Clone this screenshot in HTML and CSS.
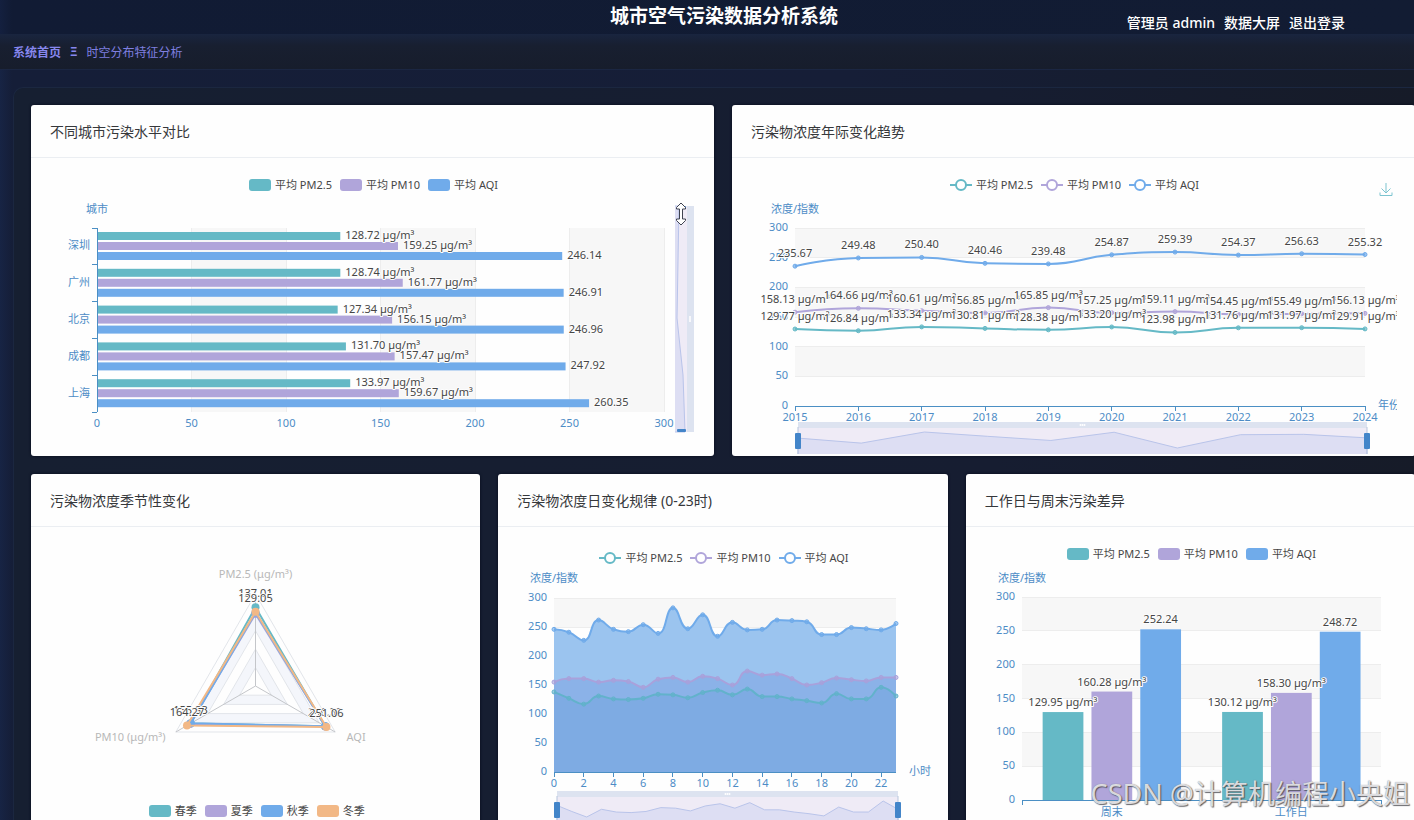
FILE: index.html
```html
<!DOCTYPE html>
<html lang="zh-CN">
<head>
<meta charset="utf-8">
<title>城市空气污染数据分析系统</title>
<link rel="stylesheet" href="styles.css">
</head>
<body>
<div class="app">
  <header class="topbar">
    <h1 class="topbar-title">城市空气污染数据分析系统</h1>
    <nav class="topbar-nav">
      <a href="#user">管理员 admin</a>
      <a href="#screen">数据大屏</a>
      <a href="#logout">退出登录</a>
    </nav>
  </header>
  <nav class="crumbs" aria-label="面包屑">
    <a class="crumb-home" href="#home">系统首页</a>
    <span class="crumb-sep">Ξ</span>
    <a href="#spacetime">时空分布特征分析</a>
  </nav>
  <main class="panel">
    <div class="row row-2">
      <section class="card">
        <h2 class="card-title">不同城市污染水平对比</h2>
        <div class="card-body">
          <ul class="legend">
            <li><i class="swatch teal"></i>平均 PM2.5</li>
            <li><i class="swatch purple"></i>平均 PM10</li>
            <li><i class="swatch blue"></i>平均 AQI</li>
          </ul>
          <svg class="chart chart-upper" id="cityChart"></svg>
        </div>
      </section>
      <section class="card">
        <h2 class="card-title">污染物浓度年际变化趋势</h2>
        <div class="card-body">
          <ul class="legend">
            <li><i class="ring teal"></i>平均 PM2.5</li>
            <li><i class="ring purple"></i>平均 PM10</li>
            <li><i class="ring blue"></i>平均 AQI</li>
          </ul>
          <button class="save" type="button" aria-label="保存为图片">
            <svg width="14" height="15" viewBox="0 0 14 15"><path d="M7 1v10M2.500 6.500 7 11l4.500-4.500M1 10.500v3h12v-3"/></svg>
          </button>
          <svg class="chart chart-upper" id="yearChart"></svg>
        </div>
      </section>
    </div>
    <div class="row row-3">
      <section class="card">
        <h2 class="card-title">污染物浓度季节性变化</h2>
        <div class="card-body">
          <svg class="chart chart-radar" id="seasonChart"></svg>
          <ul class="legend">
            <li><i class="swatch teal"></i>春季</li>
            <li><i class="swatch purple"></i>夏季</li>
            <li><i class="swatch blue"></i>秋季</li>
            <li><i class="swatch orange"></i>冬季</li>
          </ul>
        </div>
      </section>
      <section class="card">
        <h2 class="card-title">污染物浓度日变化规律 (0-23时)</h2>
        <div class="card-body">
          <ul class="legend legend-low">
            <li><i class="ring teal"></i>平均 PM2.5</li>
            <li><i class="ring purple"></i>平均 PM10</li>
            <li><i class="ring blue"></i>平均 AQI</li>
          </ul>
          <svg class="chart chart-lower" id="hourChart"></svg>
        </div>
      </section>
      <section class="card">
        <h2 class="card-title">工作日与周末污染差异</h2>
        <div class="card-body">
          <ul class="legend">
            <li><i class="swatch teal"></i>平均 PM2.5</li>
            <li><i class="swatch purple"></i>平均 PM10</li>
            <li><i class="swatch blue"></i>平均 AQI</li>
          </ul>
          <svg class="chart chart-lower" id="weekChart"></svg>
        </div>
      </section>
    </div>
  </main>
  <div class="watermark">CSDN @计算机编程小央姐</div>
</div>
<script src="charts.js"></script>
</body>
</html>
```

FILE: styles.css
```css
*,
*::before {
  box-sizing: border-box;
}

body {
  margin: 0;
  font-family: "Noto Sans", "Noto Sans CJK SC", sans-serif;
  background: #151d33;
}

a {
  color: inherit;
  text-decoration: none;
}

.app {
  position: relative;
  height: 100vh;
  overflow: hidden;
  background: linear-gradient(90deg, #172444 0, #151e38 12px, #161e37 60%, #161c2a 100%);
}

.topbar {
  display: grid;
  grid-template-columns: 1fr auto 1fr;
  height: 34px;
  padding: 0 69px 0 103px;
  background: linear-gradient(90deg, #14203f 0, #111b34 12px, #121c33 100%);
  color: #fff;
}

.topbar-title {
  grid-column: 2;
  margin: 0;
  font-size: 19px;
  line-height: 32px;
  font-weight: 700;
}

.topbar-nav {
  display: flex;
  justify-content: flex-end;
  align-self: end;
  gap: 9px;
  font-size: 14px;
  font-weight: 500;
  line-height: 22px;
  white-space: nowrap;
}

.crumbs {
  display: flex;
  align-items: center;
  gap: 9px;
  height: 36px;
  padding: 0 13px;
  border-bottom: 1px solid #1b2642;
  background: linear-gradient(180deg, #19253f 0, #181f30 12px, #171d2c 100%);
  color: #7f7fe0;
  font-size: 12px;
}

.crumb-home,
.crumb-sep {
  color: #8787ee;
  font-weight: 700;
}

.panel {
  margin: 17px -1px 0 13px;
  padding: 17px 0 17px 17px;
  border: 1px solid #1b2740;
  border-right: 0;
  border-radius: 10px 0 0 10px;
  background: linear-gradient(90deg, #161f31 0, #161d31 70%, #161b28 100%);
}

.row {
  display: grid;
  gap: 18px;
}

.row-2 {
  grid-template-columns: repeat(2, minmax(0, 1fr));
}

.row-3 {
  grid-template-columns: repeat(3, minmax(0, 1fr));
  margin-top: 18px;
}

.card {
  overflow: hidden;
  border-radius: 3px;
  background: #fefefe;
  box-shadow: 0 0 3px #060a1c;
}

.card-title {
  margin: 0;
  padding: 17px 19px 15px;
  border-bottom: 1px solid #ebeef2;
  color: #36383b;
  font-size: 14px;
  font-weight: 400;
  line-height: 20px;
}

.card-body {
  position: relative;
  padding: 17px 18px 0;
}

.legend {
  display: flex;
  justify-content: center;
  gap: 8px;
  margin: 0;
  padding: 0 0 0 2px;
  list-style: none;
  color: #464646;
  font-size: 11px;
  line-height: 20px;
}

.legend-low {
  padding-top: 4px;
}

.legend li {
  display: flex;
  align-items: center;
  gap: 4px;
}

.swatch {
  width: 22px;
  height: 12px;
  border-radius: 3px;
  background: currentColor;
}

.ring {
  display: flex;
  justify-content: center;
  width: 22px;
  height: 12px;
  background: linear-gradient(currentColor, currentColor) center / 100% 2px no-repeat;
}

.ring::before {
  width: 12px;
  height: 12px;
  border: 2px solid currentColor;
  border-radius: 50%;
  background: #fff;
  content: "";
}

.teal { color: #65b9c6; }
.purple { color: #b0a5da; }
.blue { color: #70abea; }
.orange { color: #f2b886; }

.save {
  position: absolute;
  top: 24px;
  right: 22px;
  padding: 0;
  border: 0;
  background: none;
  line-height: 0;
}

.save path {
  fill: none;
  stroke: #7cc4d0;
  stroke-width: 1;
}

.chart {
  display: block;
  width: 100%;
  overflow: hidden;
  font-size: 11px;
}

.chart-upper { height: 261px; }
.chart-lower { height: 270px; overflow: visible; }
.chart-radar { height: 257px; }

.axis-text { fill: #4d8cc6; }
.axis-line { fill: none; stroke: #4b8fc4; stroke-width: 1; shape-rendering: crispEdges; }
.band { fill: #f7f7f7; }
.split { stroke: #ededed; stroke-width: 1; shape-rendering: crispEdges; }
.value { fill: #464646; stroke: #fdfdfd; stroke-width: 2px; stroke-linejoin: round; paint-order: stroke; }
.indicator { fill: #b8b8b8; }
.curve { fill: none; stroke-width: 2; stroke-linejoin: round; }
.zoom-move { fill: #dde3f0; }
.zoom-body { fill: #efebf6; }
.zoom-data { fill: #dddef3; stroke: #b9c4ea; stroke-width: 1; }
.zoom-edge { stroke: #b7c5dd; stroke-width: 1; }
.zoom-handle { fill: #4385c9; }
.zoom-dot { fill: #fff; }
.pointer { fill: #fff; stroke: #3f4350; stroke-width: 1; }

.watermark {
  position: absolute;
  right: 4px;
  bottom: 6px;
  color: rgba(240, 240, 242, 0.85);
  font-size: 27px;
  line-height: 40px;
  text-shadow: 1px 1px 1px rgba(70, 70, 75, 0.8), 0 0 1px rgba(110, 110, 115, 0.8);
  pointer-events: none;
}
```

FILE: charts.js
```js
const NS = 'http://www.w3.org/2000/svg';
const TEAL = '#65b9c6', PURPLE = '#b0a5da', BLUE = '#70abea', ORANGE = '#f2b886';
const UNIT = ' µg/m³';

function add(svg, tag, attrs, text) {
  const node = document.createElementNS(NS, tag);
  for (const key in attrs) node.setAttribute(key, attrs[key]);
  if (text !== undefined) node.textContent = text;
  svg.appendChild(node);
  return node;
}

// Text whose vertical middle sits at y
function label(svg, x, y, text, anchor, cls) {
  add(svg, 'text', { x, y: y + 4, 'text-anchor': anchor, class: cls }, text);
}

// Smooth curve whose control points never leave the segment they belong to
function curve(pts) {
  const clamp = (v, a, b) => Math.max(Math.min(a, b), Math.min(v, Math.max(a, b)));
  let d = `M${pts[0]}`, cp0 = pts[0];
  for (let i = 1; i < pts.length; i++) {
    const prev = pts[i - 1], p = pts[i], next = pts[i + 1];
    let cp1 = p, out = p;
    if (next) {
      const a = Math.hypot(p[0] - prev[0], p[1] - prev[1]);
      const b = Math.hypot(next[0] - p[0], next[1] - p[1]);
      const r = b / (a + b);
      out = [0, 1].map(k => clamp(p[k] + (next[k] - prev[k]) * 0.5 * r, p[k], next[k]));
      cp1 = [0, 1].map(k => clamp(p[k] - (out[k] - p[k]) * a / b, prev[k], p[k]));
      out = [0, 1].map(k => p[k] + (p[k] - cp1[k]) * b / a);
    }
    d += `C${cp0} ${cp1} ${p}`;
    cp0 = out;
  }
  return d;
}

function valueAxis(svg, left, right, top, bottom, name, nameY) {
  const scale = v => bottom - v / 300 * (bottom - top);
  for (let v = 50; v < 300; v += 100)
    add(svg, 'rect', { x: left, y: scale(v + 50), width: right - left, height: scale(v) - scale(v + 50), class: 'band' });
  for (let v = 50; v <= 300; v += 50)
    add(svg, 'line', { x1: left, x2: right, y1: scale(v), y2: scale(v), class: 'split' });
  for (let v = 0; v <= 300; v += 50) label(svg, left - 7, scale(v) - 1, v, 'end', 'axis-text');
  label(svg, left, nameY, name, 'middle', 'axis-text');
  return scale;
}

function zoomBar(svg, left, right, top, data) {
  const hi = Math.max(...data), lo = Math.min(...data);
  add(svg, 'rect', { x: left, y: top, width: right - left, height: 6, class: 'zoom-move' });
  add(svg, 'rect', { x: left, y: top + 6, width: right - left, height: 26, class: 'zoom-body' });
  const pts = data.map((v, i) => [left + i * (right - left) / (data.length - 1), top + 10 + (hi - v) / (hi - lo) * 16]);
  add(svg, 'path', { d: `M${left},${top + 32}L${pts.join('L')}L${right},${top + 32}`, class: 'zoom-data' });
  for (const x of [left, right]) {
    add(svg, 'line', { x1: x, x2: x, y1: top + 5, y2: top + 32, class: 'zoom-edge' });
    add(svg, 'rect', { x: x - 3, y: top + 11, width: 6, height: 16, rx: 1, class: 'zoom-handle' });
  }
  for (const dx of [-2, 0, 2]) add(svg, 'circle', { cx: (left + right) / 2 + dx, cy: top + 3, r: 1, class: 'zoom-dot' });
}

function drawCities(svg) {
  const W = svg.clientWidth, left = 48, right = W - 32, top = 33, bottom = 217;
  const step = (bottom - top) / 5, x = v => left + v / 300 * (right - left);
  const rows = [
    ['深圳', 128.72, 159.25, 246.14], ['广州', 128.74, 161.77, 246.91], ['北京', 127.34, 156.15, 246.96],
    ['成都', 131.70, 157.47, 247.92], ['上海', 133.97, 159.67, 260.35]
  ];
  for (let v = 50; v < 300; v += 100)
    add(svg, 'rect', { x: x(v), y: top, width: x(50) - x(0), height: bottom - top, class: 'band' });
  for (let v = 50; v <= 300; v += 50)
    add(svg, 'line', { x1: x(v), x2: x(v), y1: top, y2: bottom, class: 'split' });
  for (let v = 0; v <= 300; v += 50) label(svg, x(v), bottom + 11, v, 'middle', 'axis-text');
  label(svg, left, 14, '城市', 'middle', 'axis-text');
  rows.forEach((row, i) => {
    const y = top + i * step;
    label(svg, left - 7, y + step / 2 - 1, row[0], 'end', 'axis-text');
    [TEAL, PURPLE, BLUE].forEach((fill, k) =>
      add(svg, 'rect', { x: left, y: y + 4 + k * 10, width: x(row[k + 1]) - left, height: 8, fill }));
  });
  rows.forEach((row, i) => [0, 1, 2].forEach(k =>
    label(svg, x(row[k + 1]) + 5, top + i * step + 7 + k * 10, row[k + 1].toFixed(2) + (k < 2 ? UNIT : ''), 'start', 'value')));
  add(svg, 'line', { x1: left, x2: left, y1: top, y2: bottom, class: 'axis-line' });
  for (let i = 0; i <= 5; i++)
    add(svg, 'line', { x1: left - 5, x2: left, y1: top + i * step, y2: top + i * step, class: 'axis-line' });

  const z = W - 21;
  add(svg, 'rect', { x: z, y: 11, width: 13, height: 226, class: 'zoom-body' });
  add(svg, 'path', { d: `M${z},11L${z + 4},11L${z + 3},67L${z + 2},123L${z + 8},180L${z + 10},237L${z},237`, class: 'zoom-data' });
  add(svg, 'rect', { x: z + 12, y: 11, width: 7, height: 226, class: 'zoom-move' });
  for (const dy of [-2, 0, 2]) add(svg, 'circle', { cx: z + 15, cy: 124 + dy, r: 1, class: 'zoom-dot' });
  for (const y of [11, 234])
    add(svg, 'rect', { x: z + 2, y, width: 9, height: 3, rx: 1, class: 'zoom-handle' });
  add(svg, 'path', { transform: `translate(${z + 6} 19)`, d: 'M0-11 4.500-6.500V-5H1.500V5H4.500V6.500L0 11-4.500 6.500V5H-1.500V-5H-4.500V-6.500Z', class: 'pointer' });
}

const years = {
  pm25: [129.77, 126.84, 133.34, 130.81, 128.38, 133.20, 123.98, 131.76, 131.97, 129.91],
  pm10: [158.13, 164.66, 160.61, 156.85, 165.85, 157.25, 159.11, 154.45, 155.49, 156.13],
  aqi: [235.67, 249.48, 250.40, 240.46, 239.48, 254.87, 259.39, 254.37, 256.63, 255.32]
};

function drawYears(svg) {
  const W = svg.clientWidth, left = 45, right = W - 32, top = 33, bottom = 211;
  const y = valueAxis(svg, left, right, top, bottom, '浓度/指数', 14);
  const x = i => left + i * (right - left) / 9;
  add(svg, 'line', { x1: left, x2: right, y1: bottom, y2: bottom, class: 'axis-line' });
  for (let i = 0; i < 10; i++) {
    add(svg, 'line', { x1: x(i), x2: x(i), y1: bottom, y2: bottom + 5, class: 'axis-line' });
    label(svg, x(i), bottom + 11, 2015 + i, 'middle', 'axis-text');
  }
  label(svg, right + 13, bottom - 1, '年份', 'start', 'axis-text');
  const sets = [[years.pm25, TEAL, UNIT], [years.pm10, PURPLE, UNIT], [years.aqi, BLUE, '']];
  for (const [data, stroke] of sets) {
    const pts = data.map((v, i) => [x(i), y(v)]);
    add(svg, 'path', { d: curve(pts), stroke, class: 'curve' });
    for (const [cx, cy] of pts) add(svg, 'circle', { cx, cy, r: 2, fill: stroke, stroke, 'fill-opacity': 0.7 });
  }
  for (const [data, , unit] of sets)
    data.forEach((v, i) => label(svg, x(i), y(v) - 13, v.toFixed(2) + unit, 'middle', 'value'));
  zoomBar(svg, left + 3, right + 2, 227, years.pm25);
}

function drawSeasons(svg) {
  const cx = svg.clientWidth / 2, cy = 142, R = 92;
  const dirs = [[0, -1], [-0.866, 0.5], [0.866, 0.5]];
  const tri = r => dirs.map(([a, b]) => [cx + a * r, cy + b * r]).join(' ');
  for (let k = 5; k >= 1; k--)
    add(svg, 'polygon', { points: tri(R * k / 5), fill: k % 2 ? '#fefefe' : '#f4f6fb', stroke: '#e2e5ea' });
  for (const [a, b] of dirs)
    add(svg, 'line', { x1: cx, y1: cy, x2: cx + a * R, y2: cy + b * R, stroke: '#c4c6ca' });
  label(svg, cx, cy - R - 20, 'PM2.5 (μg/m³)', 'middle', 'indicator');
  label(svg, cx - 90, cy + 51, 'PM10 (μg/m³)', 'end', 'indicator');
  label(svg, cx + 91, cy + 51, 'AQI', 'start', 'indicator');
  const max = [160, 191, 282];
  const sets = [
    [TEAL, 137.01, 155.83, 246.32], [PURPLE, 125.31, 157.35, 247.52],
    [BLUE, 127.81, 155.03, 246.85], [ORANGE, 129.05, 164.27, 251.06]
  ].map(([c, ...v]) => [c, v, v.map((n, i) => [cx + dirs[i][0] * R * n / max[i], cy + dirs[i][1] * R * n / max[i]])]);
  for (const [stroke, , pts] of sets) {
    add(svg, 'polygon', { points: pts.join(' '), stroke, class: 'curve' });
    for (const p of pts) add(svg, 'circle', { cx: p[0], cy: p[1], r: 4, fill: stroke });
  }
  for (const [, v, pts] of [sets[0], sets[3]])
    pts.forEach((p, i) => label(svg, p[0], p[1] - 14, v[i].toFixed(2), 'middle', 'value'));
}

const hours = {
  pm25: [138, 127, 117, 131, 126, 125, 127, 134, 133, 128, 137, 141, 133, 143, 130, 130, 126, 123, 119, 135, 126, 126, 146, 131],
  pm10: [155, 161, 161, 155, 158, 156, 146, 160, 163, 155, 165, 161, 150, 174, 167, 169, 161, 150, 154, 162, 159, 157, 163, 163],
  aqi: [246, 241, 227, 262, 246, 242, 254, 239, 283, 247, 271, 234, 258, 245, 246, 262, 261, 259, 237, 237, 249, 247, 245, 256]
};

function drawHours(svg) {
  const W = svg.clientWidth, left = 38, right = W - 33, top = 30, bottom = 204;
  const y = valueAxis(svg, left, right, top, bottom, '浓度/指数', 10);
  const x = i => left + i * (right - left) / 23;
  const sets = [[hours.aqi, '#9bc4ef', BLUE], [hours.pm10, '#8bb2e8', '#a9a1db'], [hours.pm25, '#7eabe3', '#62b2cb']];
  for (const [data, fill] of sets)
    add(svg, 'path', { d: curve(data.map((v, i) => [x(i), y(v)])) + `L${right},${bottom}L${left},${bottom}Z`, fill });
  for (const [data, , stroke] of sets) {
    const pts = data.map((v, i) => [x(i), y(v)]);
    add(svg, 'path', { d: curve(pts), stroke, class: 'curve' });
    for (const [cx, cy] of pts) add(svg, 'circle', { cx, cy, r: 2, fill: stroke, 'fill-opacity': 0.6, stroke });
  }
  add(svg, 'line', { x1: left, x2: right, y1: bottom, y2: bottom, class: 'axis-line' });
  for (let i = 0; i < 24; i += 2) {
    add(svg, 'line', { x1: x(i), x2: x(i), y1: bottom, y2: bottom + 5, class: 'axis-line' });
    label(svg, x(i), bottom + 11, i, 'middle', 'axis-text');
  }
  label(svg, right + 13, bottom - 1, '小时', 'start', 'axis-text');
  zoomBar(svg, left + 3, right + 2, 223, hours.pm25);
}

function drawWeek(svg) {
  const W = svg.clientWidth, left = 38, right = W - 16, top = 33, bottom = 236;
  const y = valueAxis(svg, left, right, top, bottom, '浓度/指数', 14);
  const step = (right - left) / 2;
  const groups = [['周末', 129.95, 160.28, 252.24], ['工作日', 130.12, 158.30, 248.72]];
  groups.forEach((g, i) => [TEAL, PURPLE, BLUE].forEach((fill, k) =>
    add(svg, 'rect', { x: left + step * (i + 0.115 + k * 0.272), y: y(g[k + 1]), width: step * 0.227, height: bottom - y(g[k + 1]), fill })));
  groups.forEach((g, i) => [0, 1, 2].forEach(k =>
    label(svg, left + step * (i + 0.228 + k * 0.272), y(g[k + 1]) - 10, g[k + 1].toFixed(2) + (k < 2 ? UNIT : ''), 'middle', 'value')));
  add(svg, 'path', { d: `M${left},${bottom + 5}V${bottom}H${right}V${bottom + 5}M${left + step},${bottom}v5`, class: 'axis-line' });
  groups.forEach((g, i) => label(svg, left + step * (i + 0.5), bottom + 12, g[0], 'middle', 'axis-text'));
}

const charts = { cityChart: drawCities, yearChart: drawYears, seasonChart: drawSeasons, hourChart: drawHours, weekChart: drawWeek };

function render() {
  for (const id in charts) {
    const svg = document.getElementById(id);
    svg.replaceChildren();
    charts[id](svg);
  }
}

render();
window.addEventListener('resize', render);
```
